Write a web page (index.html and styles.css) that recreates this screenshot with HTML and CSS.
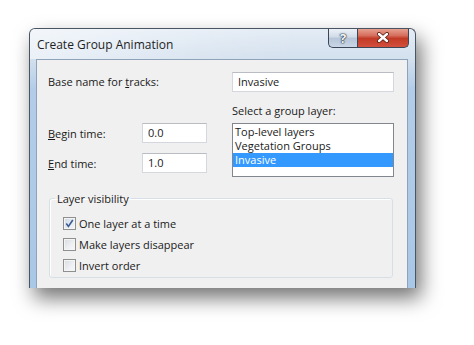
FILE: index.html
```html
<!DOCTYPE html>
<html lang="en">
<head>
  <meta charset="UTF-8">
  <title>Create Group Animation</title>
  <link rel="stylesheet" href="styles.css">
</head>
<body>
  <div class="stage">
    <div class="window">
      <!-- title bar -->
      <div class="titlebar">
        <span class="title">Create Group Animation</span>
        <div class="caption-buttons">
          <div class="btn-help">?</div>
          <div class="btn-close">
            <svg width="14" height="11" viewBox="0 0 14 11">
              <path d="M3 2 L11 9 M11 2 L3 9" stroke="#5a1a12" stroke-width="4" stroke-linecap="round"/>
              <path d="M3 2 L11 9 M11 2 L3 9" stroke="#fff" stroke-width="2.4" stroke-linecap="round"/>
            </svg>
          </div>
        </div>
      </div>

      <div class="client">
        <div class="top">
          <div class="left-col">
            <div class="label-line">Base name for <u>t</u>racks:</div>
            <div class="time-rows">
              <div class="time-row">
                <label class="time-label"><u>B</u>egin time:</label>
                <div class="textbox small">0.0</div>
              </div>
              <div class="time-row">
                <label class="time-label"><u>E</u>nd time:</label>
                <div class="textbox small">1.0</div>
              </div>
            </div>
          </div>

          <div class="right-col">
            <div class="textbox">Invasive</div>
            <div class="list-caption">Select a group layer:</div>
            <div class="listbox">
              <div class="item">Top-level layers</div>
              <div class="item">Vegetation Groups</div>
              <div class="item selected">Invasive</div>
            </div>
          </div>
        </div>

        <fieldset class="group">
          <legend>Layer visibility</legend>
          <div class="check-row">
            <span class="checkbox checked">
              <svg width="9" height="9" viewBox="0 0 9 9"><path d="M1.3 4.6 L3.4 7.4 L7.8 1" fill="none" stroke="#3b5b94" stroke-width="1.6"/></svg>
            </span>
            <span>One layer at a time</span>
          </div>
          <div class="check-row">
            <span class="checkbox"></span>
            <span>Make layers disappear</span>
          </div>
          <div class="check-row">
            <span class="checkbox"></span>
            <span>Invert order</span>
          </div>
        </fieldset>
      </div>
    </div>
  </div>
</body>
</html>
```

FILE: styles.css
```css
body {
  margin: 0;
  padding: 0;
  background-color: #ffffff;
  font-family: "Open Sans", "Noto Sans", sans-serif;
  font-size: 11px;
  color: #1a1a1a;
}

.stage {
  padding: 28px 0 0 29px;
  height: 317px;
}

.window {
  width: 385px;
  height: 259px;
  display: flex;
  flex-direction: column;
  border: 1px solid #4a5563;
  border-bottom: none;
  border-radius: 6px 6px 0 0;
  background: linear-gradient(to bottom, #e4ecf5 0, #d3e0ee 30px, #b3cde8 60px, #a9c7e6 100%);
  box-shadow: 5px 10px 20px rgba(0, 0, 0, 0.55);
  overflow: hidden;
}

/* title bar */
.titlebar {
  height: 30px;
  display: flex;
  align-items: center;
  justify-content: space-between;
  background: linear-gradient(100deg, rgba(255, 255, 255, 0.55) 0, rgba(255, 255, 255, 0.15) 45%, rgba(255, 255, 255, 0) 70%);
}

.title {
  padding-left: 7px;
  font-size: 12px;
  color: #1e1e1e;
}

.caption-buttons {
  align-self: flex-start;
  display: flex;
  margin-right: 6px;
  margin-top: -1px;
}

.btn-help,
.btn-close {
  height: 19px;
  border: 1px solid #3b4756;
  border-top: none;
  display: flex;
  align-items: center;
  justify-content: center;
}

.btn-help {
  width: 28px;
  border-radius: 0 0 0 5px;
  border-right: none;
  background: linear-gradient(to bottom, #eef3f8 0, #d3dde9 45%, #b7c6d8 55%, #c9d7e6 100%);
  color: #f4f6f9;
  font-weight: bold;
  font-size: 13px;
  text-shadow: 0 0 1px #223040, 0 0 1px #223040, 0 0 2px #223040;
}

.btn-close {
  width: 50px;
  border-radius: 0 0 5px 0;
  background: linear-gradient(to bottom, #e8a897 0, #d66d5c 40%, #c13a26 55%, #d4503c 100%);
}

/* client area */
.client {
  flex: 1;
  margin: 0 7px 0 6px;
  background-color: #f0f0f0;
  border: 1px solid #8ea3b9;
  border-bottom: none;
}

.top {
  display: flex;
  padding: 12px 13px 0 11px;
}

.left-col {
  width: 184px;
}

.label-line {
  line-height: 20px;
}

.time-rows {
  margin-top: 31px;
  display: flex;
  flex-direction: column;
  gap: 10px;
}

.time-row {
  display: flex;
  align-items: center;
}

.time-label {
  width: 94px;
}

.right-col {
  width: 162px;
}

.textbox {
  height: 18px;
  line-height: 18px;
  padding: 0 5px;
  background-color: #ffffff;
  border: 1px solid #d4d8de;
  border-top-color: #b9bdc3;
}

.textbox.small {
  width: 53px;
  padding: 0 5px;
}

.list-caption {
  margin-top: 11px;
  line-height: 15px;
}

.listbox {
  margin-top: 5px;
  height: 54px;
  padding-top: 1px;
  box-sizing: border-box;
  background-color: #ffffff;
  border: 1px solid #82878f;
}

.item {
  line-height: 14px;
  padding: 0 2px;
}

.item.selected {
  background-color: #3399ff;
  color: #ffffff;
}

/* group box */
.group {
  margin: 14px 14px 0 12px;
  padding: 7px 0 1px 5px;
  border: 1px solid #d5dfe5;
  border-radius: 3px;
  box-shadow: inset 1px 1px 0 #ffffff;
}

.group legend {
  padding: 0 2px;
  line-height: 15px;
}

.check-row {
  height: 21px;
  display: flex;
  align-items: center;
  padding-left: 8px;
}

.checkbox {
  width: 11px;
  height: 11px;
  margin-right: 3px;
  border: 1px solid #8e8f8f;
  background: linear-gradient(135deg, #d8dbe0 0, #eef0f3 60%, #f7f8f9 100%);
  box-shadow: inset 0 0 0 1px #f4f4f4;
  display: flex;
  align-items: center;
  justify-content: center;
}

.checkbox.checked {
  background: linear-gradient(135deg, #cfd8e4 0, #e6ecf3 60%, #f4f6f9 100%);
}
```
